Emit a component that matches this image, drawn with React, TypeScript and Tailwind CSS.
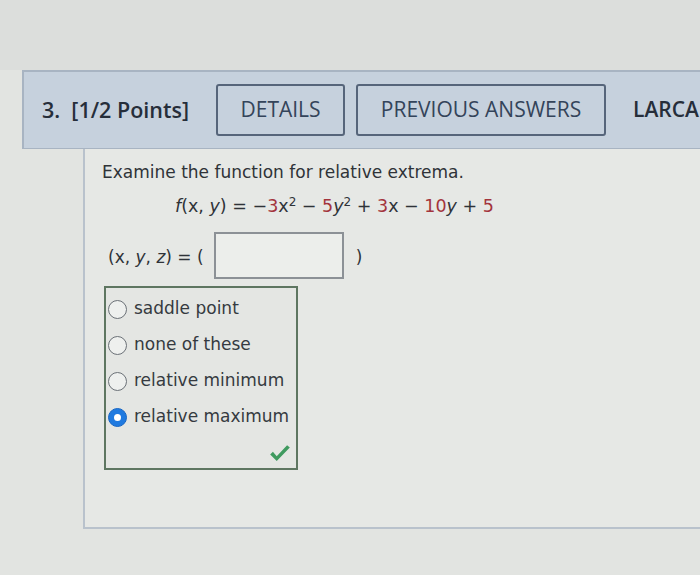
import React from 'react';

const OPTIONS = ['saddle point', 'none of these', 'relative minimum', 'relative maximum'];

function Radio({ checked }: { checked: boolean }) {
  if (checked) {
    return (
      <span className="w-[19px] h-[19px] rounded-full bg-[#1f7ae0] border border-[#1766c4] flex items-center justify-center shrink-0">
        <span className="w-[7px] h-[7px] rounded-full bg-white" />
      </span>
    );
  }
  return <span className="w-[19px] h-[19px] rounded-full border-[1.5px] border-[#6b7177] bg-[#eef0ee] shrink-0" />;
}

export default function App() {
  return (
    <div className="h-[575px] w-[700px] overflow-hidden bg-[#e2e4e1] font-['DejaVu_Sans',sans-serif]">
      <div className="h-[70px] bg-[#dcdedc]" />

      {/* Question header */}
      <div className="ml-[22px] h-[79px] bg-[#c6d1dd] border-t-2 border-l-2 border-b border-[#a8b4c2] flex items-center pl-[18px] gap-[27px] font-['Open_Sans',sans-serif] whitespace-nowrap">
        <span className="text-[21.5px] font-semibold text-[#262e3a]">3. &nbsp;[1/2 Points]</span>
        <div className="flex gap-[11px]">
          <div className="w-[129px] h-[52px] border-2 border-[#56657a] rounded-[3px] flex items-center justify-center text-[21px] text-[#34445a]">
            DETAILS
          </div>
          <div className="w-[250px] h-[52px] border-2 border-[#56657a] rounded-[3px] flex items-center justify-center text-[21px] text-[#34445a]">
            PREVIOUS ANSWERS
          </div>
        </div>
        <span className="text-[21px] font-semibold text-[#262e3a]">LARCA</span>
      </div>

      {/* Question body */}
      <div className="ml-[83px] h-[380px] border-l-2 border-b-2 border-[#b9c2cc] bg-[#e6e8e5] pl-[17px] pt-[8px] text-[#2f3338]">
        <p className="text-[17px] leading-[30px]">Examine the function for relative extrema.</p>
        <p className="mt-[6px] pl-[73px] text-[17.5px] leading-[26px]">
          <i>f</i>(x, <i>y</i>) = −<span className="text-[#a3343c]">3</span>x<sup className="text-[12px]">2</sup> − <span className="text-[#a3343c]">5</span><i>y</i><sup className="text-[12px]">2</sup> + <span className="text-[#a3343c]">3</span>x − <span className="text-[#a3343c]">10</span><i>y</i> + <span className="text-[#a3343c]">5</span>
        </p>
        <div className="mt-[13px] flex items-center pl-[6px] text-[17px]">
          <span className="pt-[4px]">(x, <i>y</i>, <i>z</i>) = (</span>
          <span className="ml-[10px] w-[130px] h-[47px] border-2 border-[#8c9196] bg-[#eceeeb]" />
          <span className="ml-[12px] pt-[4px]">)</span>
        </div>
        <div className="mt-[7px] ml-[2px] w-[194px] h-[184px] border-2 border-[#5e7661] bg-[#e4e6e3] pl-[2px] pt-[3px] flex flex-col">
          {OPTIONS.map((o, i) => (
            <div key={o} className="flex items-center gap-[7px] h-[36px] text-[17px]">
              <Radio checked={i === 3} />
              <span className="text-[#353a40]">{o}</span>
            </div>
          ))}
          <div className="flex justify-end pr-[4px] mt-[9px]">
            <svg width="24" height="20" viewBox="0 0 22 18">
              <path d="M2 9.5 L8 15.5 L20 3 L17.5 1 L8 11 L4.5 7 Z" fill="#3f9a5f" />
            </svg>
          </div>
        </div>
      </div>
    </div>
  );
}
